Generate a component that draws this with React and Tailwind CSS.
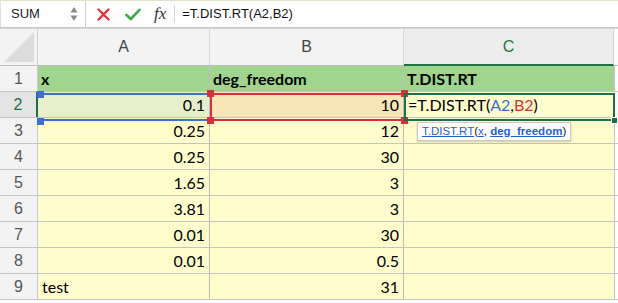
import React from "react";

const rows = [
  { a: "0.1", b: "10" },
  { a: "0.25", b: "12" },
  { a: "0.25", b: "30" },
  { a: "1.65", b: "3" },
  { a: "3.81", b: "3" },
  { a: "0.01", b: "30" },
  { a: "0.01", b: "0.5" },
  { a: "test", b: "31", left: true },
];

const cellFont = { fontFamily: "Lato, 'Open Sans', sans-serif" };

function Handle({ cls }) {
  return <div className={`absolute w-[7px] h-[7px] ${cls}`} />;
}

export default function App() {
  return (
    <div className="w-[618px] h-[303px] overflow-hidden bg-white relative select-none" style={{ fontFamily: "'Liberation Sans', Arial, sans-serif" }}>
      {/* Formula bar */}
      <div className="h-[28px] flex items-stretch border-t border-[#e4e0d2] border-b border-b-[#c8c8c8] bg-white">
        <div className="w-[86px] flex items-center justify-between pl-[10px] pr-[7px] border-r border-[#cfcfcf] border-l border-l-[#e0e0e0]">
          <span className="text-[13px] text-[#222]">SUM</span>
          <svg width="8" height="16" viewBox="0 0 8 16">
            <path d="M4 1 L7.5 6.5 L0.5 6.5 Z" fill="#8a8a8a" />
            <path d="M4 15 L7.5 9.5 L0.5 9.5 Z" fill="#8a8a8a" />
          </svg>
        </div>
        <div className="flex items-center pl-[11px]">
          <svg width="13" height="13" viewBox="0 0 13 13">
            <path d="M1.5 1.5 L11.5 11.5 M11.5 1.5 L1.5 11.5" stroke="#e8333b" strokeWidth="2.4" strokeLinecap="round" />
          </svg>
          <svg className="ml-[15px]" width="16" height="13" viewBox="0 0 16 13">
            <path d="M1.5 7 L5.8 11 L14.5 1.8" stroke="#3aaa45" strokeWidth="2.6" fill="none" strokeLinecap="round" strokeLinejoin="round" />
          </svg>
          <span className="ml-[13px] text-[17px] italic text-[#333]" style={{ fontFamily: "'Liberation Serif', serif" }}>
            fx
          </span>
          <div className="ml-[8px] w-px h-[18px] bg-[#d8d8d8]" />
          <span className="ml-[7px] text-[13px] text-[#111]">=T.DIST.RT(A2,B2)</span>
        </div>
      </div>
      <div className="h-px bg-[#d6d6d6]" />

      {/* Column header */}
      <div className="h-[37px] flex bg-[#f3f3f3] border-b border-[#bdbdbd]">
        <div className="w-[38px] relative border-r border-[#d0d0d0]">
          <svg className="absolute right-[3px] bottom-[3px]" width="30" height="30" viewBox="0 0 30 30">
            <path d="M30 0 L30 30 L0 30 Z" fill="#dcdcdc" />
          </svg>
        </div>
        <div className="w-[172px] flex items-center justify-center border-r border-[#d6d6d6] text-[16px] text-[#444]">A</div>
        <div className="w-[194px] flex items-center justify-center border-r border-[#d6d6d6] text-[16px] text-[#444]">B</div>
        <div className="w-[210px] flex items-center justify-center bg-[#ececec] border-b-[2px] border-[#1d7044] border-r border-r-[#d0d0d0] text-[16px] text-[#1d7044] -mb-px">C</div>
        <div className="flex-1 bg-[#fafafa]" />
      </div>

      {/* Row 1 */}
      <div className="h-[26px] flex border-b border-[#c4c4c4]">
        <div className="w-[38px] flex items-center justify-center bg-[#f3f3f3] border-r border-[#c8c8c8] text-[16px] text-[#555]">1</div>
        <div className="w-[172px] flex items-center px-[3px] bg-[#9fd58c] border-r border-[#bdbdbd] text-[16px] font-bold text-black" style={cellFont}>x</div>
        <div className="w-[194px] flex items-center px-[3px] bg-[#9fd58c] border-r border-[#bdbdbd] text-[16px] font-bold text-black" style={cellFont}>deg_freedom</div>
        <div className="w-[210px] flex items-center px-[3px] bg-[#9fd58c] text-[16px] font-bold text-black" style={cellFont}>T.DIST.RT</div>
        <div className="flex-1 bg-white border-l border-[#c4c4c4]" />
      </div>

      {/* Data rows */}
      {rows.map((r, i) => {
        const n = i + 2;
        const sel = n === 2;
        return (
          <div key={n} className="h-[26px] flex border-b border-[#c4c4c4]">
            <div
              className={`w-[38px] flex items-center justify-center border-r text-[16px] ${
                sel ? "bg-[#e4e4e4] border-r-[2px] border-[#1d7044] text-[#1d7044]" : "bg-[#f3f3f3] border-[#c8c8c8] text-[#555]"
              }`}
            >
              {n}
            </div>
            <div
              className={`w-[172px] flex items-center px-[4px] border-r border-[#bdbdbd] text-[16px] text-black ${
                r.left ? "justify-start" : "justify-end"
              } ${sel ? "bg-[#e6efcc]" : "bg-[#fffdcb]"}`}
              style={cellFont}
            >
              {r.a}
            </div>
            <div
              className={`w-[194px] flex items-center justify-end px-[4px] border-r border-[#bdbdbd] text-[16px] text-black ${
                sel ? "bg-[#f9e6b6]" : "bg-[#fffdcb]"
              }`}
              style={cellFont}
            >
              {r.b}
            </div>
            <div className="w-[210px] flex items-center px-[4px] bg-[#fffdcb] text-[16px] text-black" style={cellFont}>
              {sel ? (
                <span>
                  =T.DIST.RT(<span className="text-[#3b6fd4]">A2</span>,<span className="text-[#d8303a]">B2</span>)
                </span>
              ) : null}
            </div>
            <div className="flex-1 bg-white border-l border-[#c4c4c4]" />
          </div>
        );
      })}

      {/* Selection overlays */}
      <div className="absolute left-[38px] top-[93px] w-[173px] h-[28px] border-y-[2px] border-[#3b6fd4] pointer-events-none" />
      <Handle cls="left-[37px] top-[91px] w-[4px] h-[5px] bg-[#3b6fd4]" />
      <Handle cls="left-[37px] top-[118px] w-[4px] h-[5px] bg-[#3b6fd4]" />
      <div className="absolute left-[210px] top-[93px] w-[195px] h-[28px] border-[2px] border-r-0 border-[#d8303a] pointer-events-none" />
      <Handle cls="left-[207px] top-[90px] bg-[#d8303a]" />
      <Handle cls="left-[207px] top-[117px] bg-[#d8303a]" />
      <Handle cls="left-[401px] top-[90px] bg-[#d8303a]" />
      <Handle cls="left-[401px] top-[117px] bg-[#d8303a]" />
      <div className="absolute left-[404px] top-[93px] w-[211px] h-[28px] border-[2px] border-[#1d7044] pointer-events-none" />
      <Handle cls="left-[611px] top-[117px] w-[6px] h-[6px] bg-[#1d7044] border border-white" />

      {/* Tooltip */}
      <div
        className="absolute left-[417px] top-[122px] h-[19px] px-[4px] flex items-center bg-white border border-[#c9c9c9] shadow-[0_1px_2px_rgba(0,0,0,0.2)] text-[11.5px] text-[#111] whitespace-nowrap"
        style={{ fontFamily: "'Liberation Sans', Arial, sans-serif" }}
      >
        <span className="text-[#1f5fd6] underline">T.DIST.RT</span>(
        <span className="text-[#1f5fd6] underline">x</span>,&nbsp;
        <span className="text-[#1f5fd6] underline font-bold">deg_freedom</span>)
      </div>
    </div>
  );
}
